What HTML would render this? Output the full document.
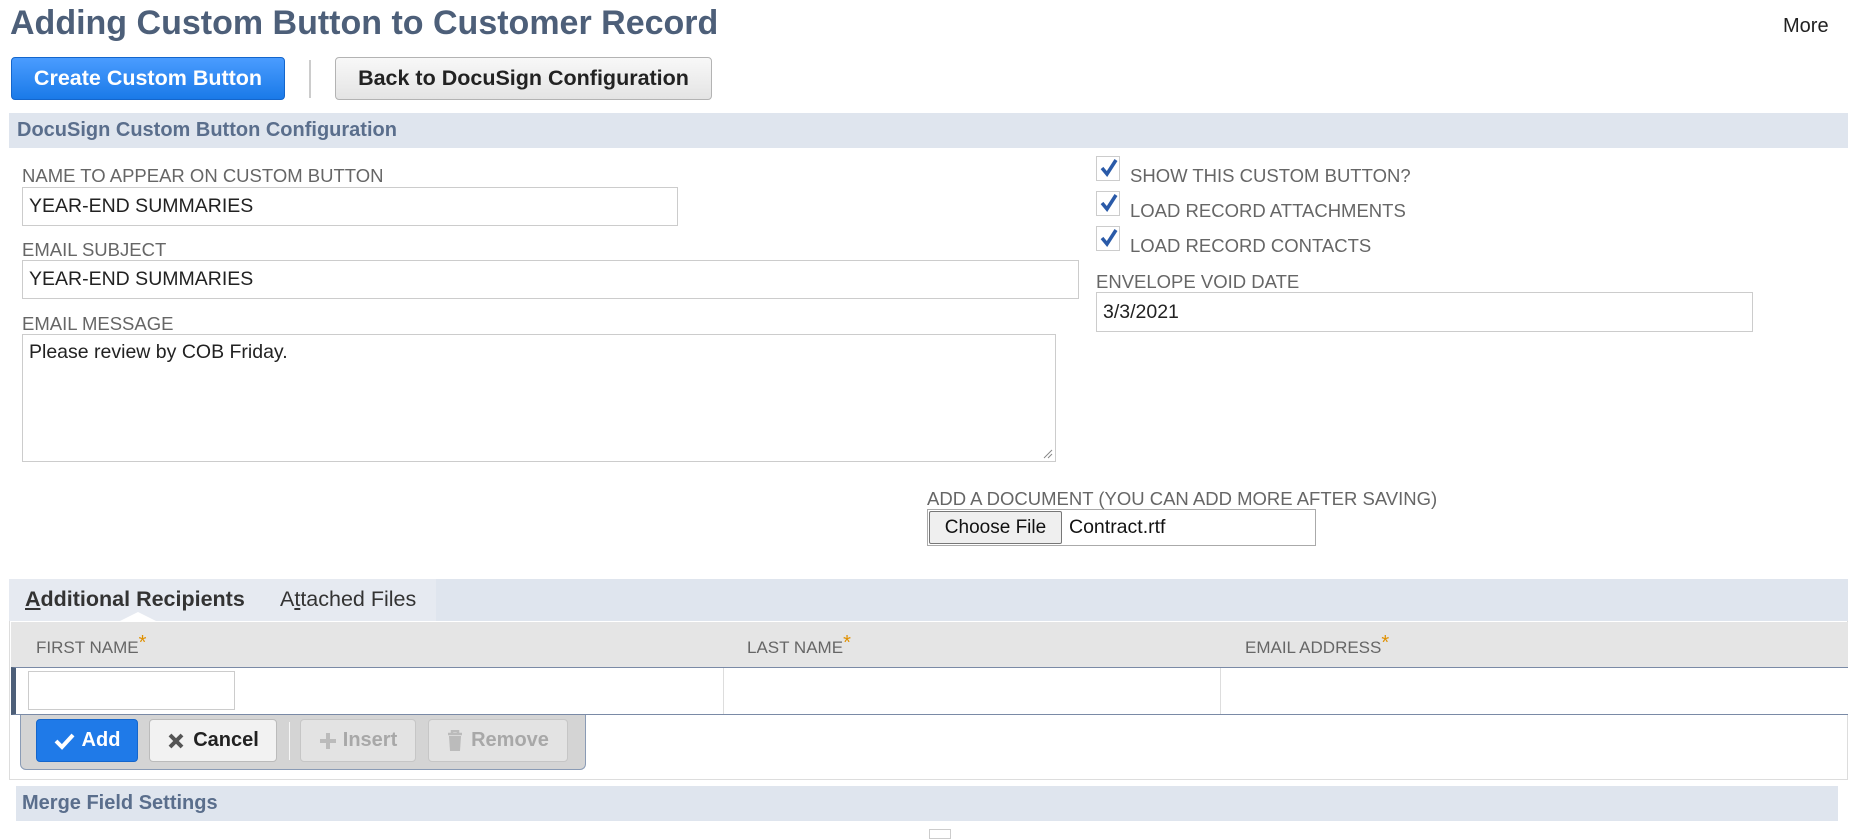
<!DOCTYPE html>
<html><head><meta charset="utf-8">
<style>
*{box-sizing:border-box;margin:0;padding:0}
body{width:1859px;height:833px;overflow:hidden;background:#fff;font-family:"Liberation Sans",Arial,sans-serif;position:relative}
.a{position:absolute}
.lbl{position:absolute;font-size:18.5px;color:#666;white-space:nowrap}
.inp{position:absolute;border:1px solid #ccc;background:#fff;font-size:19.5px;color:#222;padding-left:6px;display:flex;align-items:center}
.cb{position:absolute;width:24px;height:25px;border:1px solid #ccc;background:#fff}
.cb svg{position:absolute;left:3px;top:2px}
.cbl{position:absolute;font-size:18.5px;color:#666;white-space:nowrap}
.btn{position:absolute;border-radius:4px;font-weight:bold;font-size:20px;display:flex;align-items:center;justify-content:center;white-space:nowrap}
.bar{position:absolute;background:#dfe5ee;color:#5a6e8c;font-weight:bold;font-size:20px;display:flex;align-items:center}
</style></head><body>
<div class="a" style="left:10px;top:4px;font-size:34px;font-weight:bold;color:#4d5f79;white-space:nowrap">Adding Custom Button to Customer Record</div>
<div class="a" style="left:1783px;top:15px;font-size:20px;color:#222">More</div>

<div class="btn" style="left:11px;top:57px;width:274px;height:43px;background:linear-gradient(#4a9cff,#1a7ae8);border:1px solid #1466cc;color:#fff;font-size:21.5px">Create Custom Button</div>
<div class="a" style="left:309px;top:60px;width:2px;height:38px;background:#ccc"></div>
<div class="btn" style="left:335px;top:57px;width:377px;height:43px;background:linear-gradient(#f8f8f8,#e4e4e4);border:1px solid #b3b3b3;color:#222;font-size:21.5px">Back to DocuSign Configuration</div>

<div class="bar" style="left:9px;top:113px;width:1839px;height:35px;padding-left:8px">DocuSign Custom Button Configuration</div>

<div class="lbl" style="left:22px;top:165px">NAME TO APPEAR ON CUSTOM BUTTON</div>
<div class="inp" style="left:22px;top:187px;width:656px;height:39px">YEAR-END SUMMARIES</div>
<div class="lbl" style="left:22px;top:239px">EMAIL SUBJECT</div>
<div class="inp" style="left:22px;top:260px;width:1057px;height:39px">YEAR-END SUMMARIES</div>
<div class="lbl" style="left:22px;top:313px">EMAIL MESSAGE</div>
<div class="inp" style="left:22px;top:334px;width:1034px;height:128px;align-items:flex-start;padding-top:6px">Please review by COB Friday.</div>
<svg class="a" style="left:1043px;top:449px" width="10" height="10"><path d="M1 9L9 1M5 9L9 5" stroke="#888" stroke-width="1"/></svg>

<div class="cb" style="left:1096px;top:156px"><svg width="18" height="18"><path d="M2 9l5 6 9-14" stroke="#2a5aa8" stroke-width="3.5" fill="none"/></svg></div>
<div class="cbl" style="left:1130px;top:165px">SHOW THIS CUSTOM BUTTON?</div>
<div class="cb" style="left:1096px;top:191px"><svg width="18" height="18"><path d="M2 9l5 6 9-14" stroke="#2a5aa8" stroke-width="3.5" fill="none"/></svg></div>
<div class="cbl" style="left:1130px;top:200px">LOAD RECORD ATTACHMENTS</div>
<div class="cb" style="left:1096px;top:226px"><svg width="18" height="18"><path d="M2 9l5 6 9-14" stroke="#2a5aa8" stroke-width="3.5" fill="none"/></svg></div>
<div class="cbl" style="left:1130px;top:235px">LOAD RECORD CONTACTS</div>
<div class="lbl" style="left:1096px;top:271px">ENVELOPE VOID DATE</div>
<div class="inp" style="left:1096px;top:292px;width:657px;height:40px;padding-left:6px">3/3/2021</div>

<div class="lbl" style="left:927px;top:488px">ADD A DOCUMENT (YOU CAN ADD MORE AFTER SAVING)</div>
<div class="a" style="left:927px;top:509px;width:389px;height:37px;border:1px solid #aaa;background:#fff"></div>
<div class="a" style="left:929px;top:511px;width:133px;height:33px;border:1px solid #777;background:#efefef;font-size:19px;color:#111;display:flex;align-items:center;justify-content:center;border-radius:2px">Choose File</div>
<div class="a" style="left:1069px;top:516px;font-size:19.5px;color:#111">Contract.rtf</div>

<div class="a" style="left:9px;top:579px;width:1839px;height:201px;border:1px solid #ddd;border-top:none"></div>
<div class="a" style="left:9px;top:579px;width:1839px;height:42px;background:#dfe5ee"></div>
<div class="a" style="left:9px;top:579px;width:427px;height:42px;background:#e6eaf1"></div>
<div class="a" style="left:25px;top:587px;font-size:21.5px;font-weight:bold;color:#333"><u>A</u>dditional Recipients</div>
<div class="a" style="left:280px;top:587px;font-size:21.5px;color:#333">A<u>t</u>tached Files</div>
<div class="a" style="left:120px;top:612px;width:0;height:0;border-left:18px solid transparent;border-right:18px solid transparent;border-bottom:9px solid #fff"></div>

<div class="a" style="left:11px;top:622px;width:1837px;height:45px;background:#e5e5e5"></div>
<div class="a" style="left:36px;top:636px;font-size:17px;color:#666">FIRST NAME<span style="color:#e09000;font-size:20px;position:relative;top:-4px">*</span></div>
<div class="a" style="left:747px;top:636px;font-size:17px;color:#666">LAST NAME<span style="color:#e09000;font-size:20px;position:relative;top:-4px">*</span></div>
<div class="a" style="left:1245px;top:636px;font-size:17px;color:#666">EMAIL ADDRESS<span style="color:#e09000;font-size:20px;position:relative;top:-4px">*</span></div>
<div class="a" style="left:11px;top:667px;width:1837px;height:48px;border-top:1px solid #7a8aa6;border-bottom:1px solid #7a8aa6;border-left:5px solid #4d5f79;background:#fff"></div>
<div class="a" style="left:723px;top:668px;width:1px;height:46px;background:#ddd"></div>
<div class="a" style="left:1220px;top:668px;width:1px;height:46px;background:#ddd"></div>
<div class="a" style="left:28px;top:671px;width:207px;height:39px;border:1px solid #ccc;background:#fff"></div>

<div class="a" style="left:20px;top:715px;width:566px;height:55px;background:#d4d4d4;border:1px solid #8a9bb5;border-top:none;border-radius:0 0 6px 6px"></div>
<div class="btn" style="left:36px;top:719px;width:102px;height:43px;background:#1f7ae8;border:1px solid #1466cc;color:#fff"><svg width="22" height="18" style="margin-right:6px"><path d="M2 9l6 6 11-12" stroke="#fff" stroke-width="4" fill="none"/></svg>Add</div>
<div class="btn" style="left:149px;top:719px;width:128px;height:43px;background:#f2f2f2;border:1px solid #bbb;color:#222"><svg width="18" height="18" style="margin-right:8px"><path d="M3 3l12 12M15 3L3 15" stroke="#555" stroke-width="4"/></svg>Cancel</div>
<div class="a" style="left:289px;top:722px;width:1px;height:38px;background:#f6f6f6"></div>
<div class="btn" style="left:300px;top:719px;width:116px;height:43px;background:#e3e3e3;border:1px solid #c6c6c6;color:#a8a8a8"><svg width="18" height="18" style="margin-right:6px"><path d="M9 1v16M1 9h16" stroke="#bbb" stroke-width="4"/></svg>Insert</div>
<div class="btn" style="left:428px;top:719px;width:140px;height:43px;background:#e3e3e3;border:1px solid #c6c6c6;color:#a8a8a8"><svg width="16" height="22" style="margin-right:8px"><path d="M1 4h14M5 4V1h6v3" stroke="#bbb" stroke-width="2.5" fill="none"/><path d="M2 6h12l-1 15H3z" fill="#bbb"/></svg>Remove</div>

<div class="bar" style="left:16px;top:786px;width:1822px;height:35px;padding-left:6px">Merge Field Settings</div>
<div class="a" style="left:929px;top:829px;width:22px;height:10px;border:1px solid #ccc"></div>
</body></html>
